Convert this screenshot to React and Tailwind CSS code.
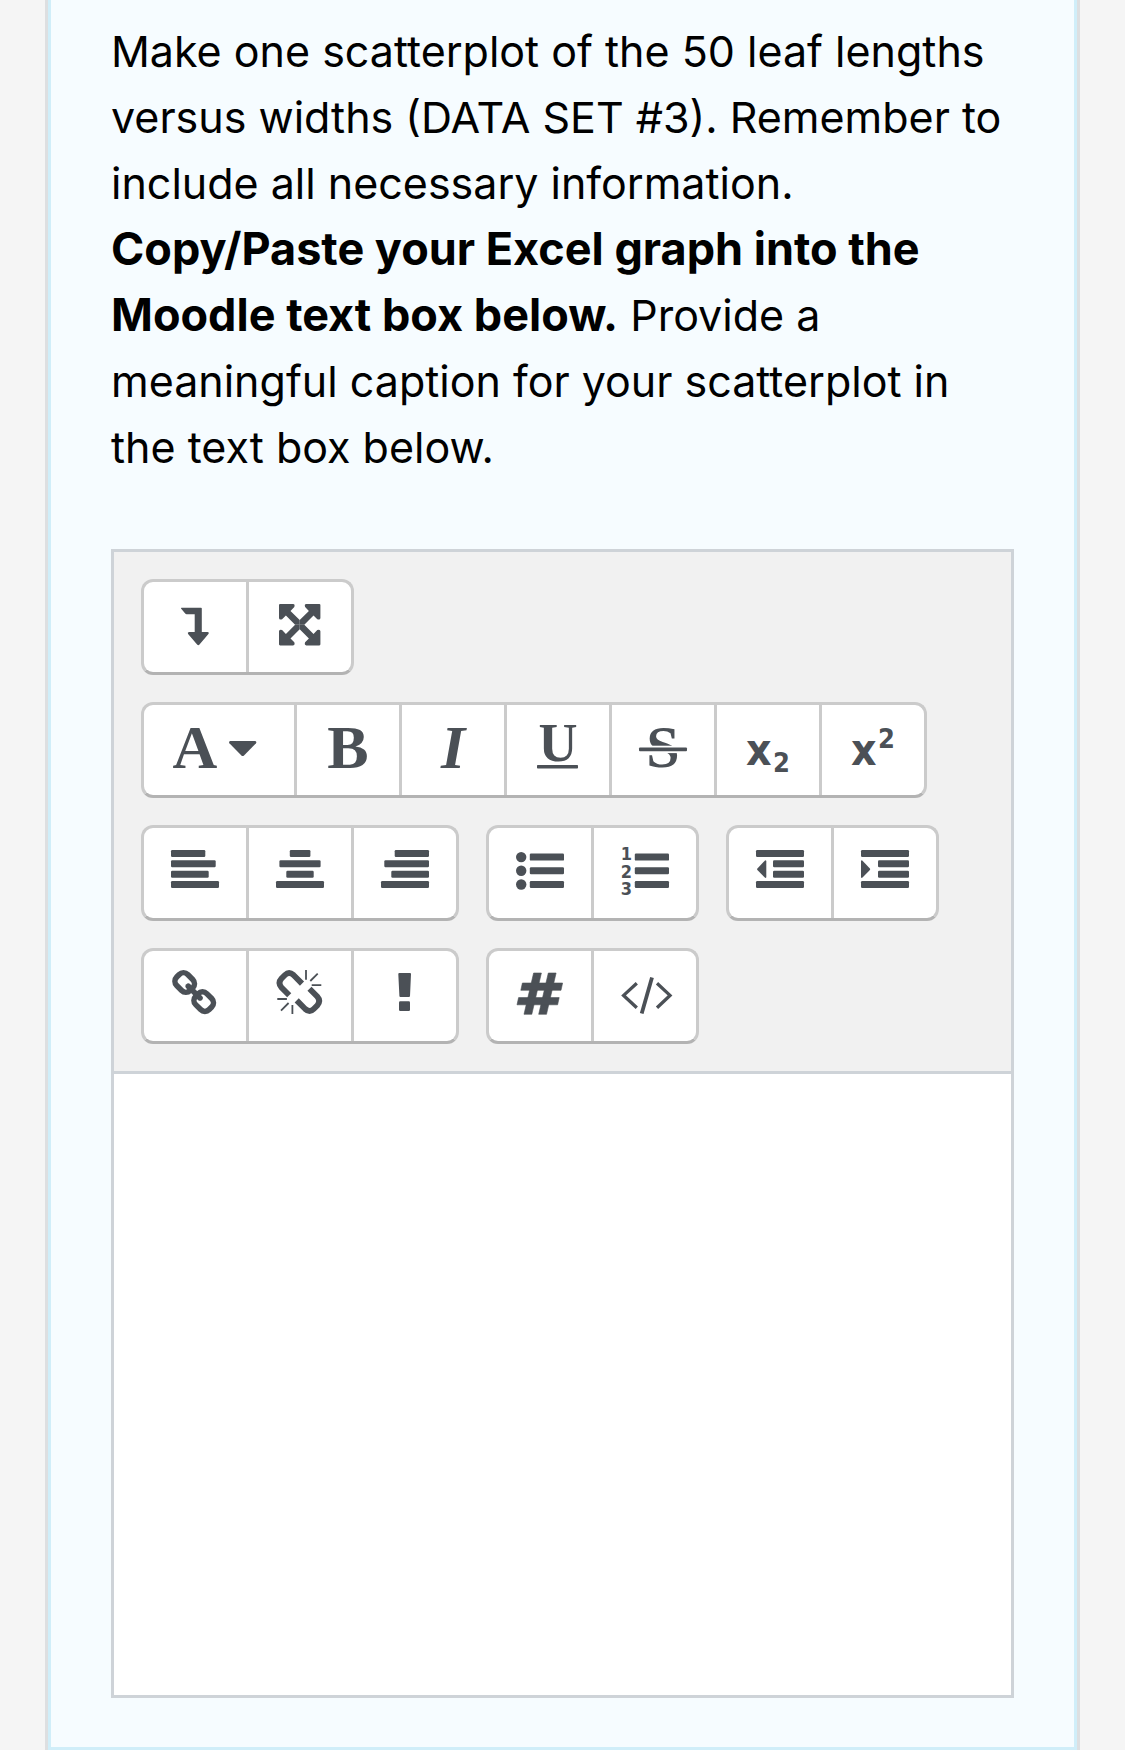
import { useState } from "react";

const serif = "font-['Liberation_Serif',serif]";
const sans = "font-['DejaVu_Sans_Condensed','DejaVu_Sans',sans-serif]";

function Icon({ children }) {
  return (
    <svg
      className="w-12 h-12 shrink-0 overflow-visible"
      viewBox="0 0 48 48"
      fill="currentColor"
      aria-hidden="true"
    >
      {children}
    </svg>
  );
}

// Horizontal bars given as [x, y, width]
function Bars({ rows }) {
  return rows.map(([x, y, w]) => (
    <rect key={y} x={x} y={y} width={w} height="7" rx="1.2" />
  ));
}

function ToggleIcon() {
  return (
    <Icon>
      <path d="M10.6 4.7H30Q30.8 4.7 30.8 5.5V29H36.5Q38.6 29.4 37.4 31L28.5 41.5Q27.3 42.8 26.1 41.5L17.1 31Q16 29.4 18 29H23.7V11.2H15.6Q14.8 11.2 14.2 10.5L10.2 5.7Q9.6 4.7 10.6 4.7Z" />
    </Icon>
  );
}

function FullscreenIcon() {
  const arm =
    "M0 0V-4.6L-9.2 -13.8L-5.4 -17.6Q-4.4 -20.6 -6.6 -20.7H-19.6Q-20.7 -20.7 -20.7 -19.6V-6.6Q-20.6 -4.4 -17.6 -5.4L-13.8 -9.2L-4.6 0Z";
  return (
    <Icon>
      <g transform="translate(23.7 21.7)">
        {[0, 90, 180, 270].map((deg) => (
          <path key={deg} d={arm} transform={`rotate(${deg})`} />
        ))}
      </g>
    </Icon>
  );
}

function LetterIcon({ children, className = "" }) {
  return (
    <Icon>
      <text
        x="24"
        y="42"
        textAnchor="middle"
        className={`${serif} text-[62px] font-bold ${className}`}
      >
        {children}
      </text>
    </Icon>
  );
}

function CaretIcon() {
  return (
    <Icon>
      <path d="M11.2 15H36.2Q38 15.6 37 17.2L25 29.4Q23.7 30.6 22.4 29.4L10.4 17.2Q9.4 15.6 11.2 15Z" />
    </Icon>
  );
}

function UnderlineIcon() {
  return (
    <Icon>
      <text
        x="24"
        y="35"
        textAnchor="middle"
        className={`${serif} text-[54px] font-bold`}
      >
        U
      </text>
      <rect x="3" y="39" width="41" height="3.6" rx="0.8" />
    </Icon>
  );
}

function StrikeIcon() {
  return (
    <Icon>
      <text
        x="24"
        y="41"
        textAnchor="middle"
        className={`${serif} text-[60px] font-bold`}
      >
        S
      </text>
      <rect x="0" y="19.7" width="48" height="7.4" fill="#fff" />
      <rect x="0" y="21.6" width="48" height="3.6" rx="1" />
    </Icon>
  );
}

function ScriptIcon({ baseline }) {
  return (
    <Icon>
      <text x="2" y="39" className={`${sans} text-[44px] font-bold`}>
        x
      </text>
      <text x="29" y={baseline} className={`${sans} text-[27px] font-bold`}>
        2
      </text>
    </Icon>
  );
}

function AlignLeftIcon() {
  return (
    <Icon>
      <Bars rows={[[0, 1, 34.3], [0, 11.3, 44.7], [0, 21.7, 37.7], [0, 32, 48]]} />
    </Icon>
  );
}

function AlignCenterIcon() {
  return (
    <Icon>
      <Bars rows={[[13.8, 1, 20.6], [3.4, 11.3, 41.2], [10.3, 21.7, 27.4], [0, 32, 48]]} />
    </Icon>
  );
}

function AlignRightIcon() {
  return (
    <Icon>
      <Bars rows={[[13.7, 1, 34.3], [3.3, 11.3, 44.7], [10.3, 21.7, 37.7], [0, 32, 48]]} />
    </Icon>
  );
}

const listRows = [[13.8, 4.6, 34.2], [13.8, 18.3, 34.2], [13.8, 32, 34.2]];

function BulletListIcon() {
  return (
    <Icon>
      {[8.1, 21.8, 35.5].map((y) => (
        <circle key={y} cx="5.2" cy={y} r="5.2" />
      ))}
      <Bars rows={listRows} />
    </Icon>
  );
}

function NumberListIcon() {
  return (
    <Icon>
      {[1, 2, 3].map((n) => (
        <text
          key={n}
          x="5.5"
          y={n * 17.2 - 5.9}
          textAnchor="middle"
          className={`${sans} text-[18px] font-bold`}
        >
          {n}
        </text>
      ))}
      <Bars rows={listRows} />
    </Icon>
  );
}

const indentRows = [[0, 1, 48], [17, 11.3, 31], [17, 21.7, 31], [0, 32, 48]];

function OutdentIcon() {
  return (
    <Icon>
      <Bars rows={indentRows} />
      <path d="M10.3 12V28.3Q9.8 29.4 8.8 28.6L1.4 20.9Q0.8 20.1 1.4 19.4L8.8 11.7Q9.8 10.9 10.3 12Z" />
    </Icon>
  );
}

function IndentIcon() {
  return (
    <Icon>
      <Bars rows={indentRows} />
      <path d="M0 12V28.3Q0.5 29.4 1.5 28.6L8.9 20.9Q9.5 20.1 8.9 19.4L1.5 11.7Q0.5 10.9 0 12Z" />
    </Icon>
  );
}

function LinkIcon() {
  return (
    <Icon>
      <g fill="none" stroke="currentColor" strokeWidth="5.6">
        <rect x="-9.5" y="-7.8" width="19" height="15.6" rx="6" transform="translate(13.7 10.5) rotate(45)" />
        <rect x="-9.5" y="-7.8" width="19" height="15.6" rx="6" transform="translate(32.7 29.6) rotate(45)" />
        <path d="M17.3 14.2L29 25.9" strokeLinecap="round" />
      </g>
    </Icon>
  );
}

function UnlinkIcon() {
  return (
    <Icon>
      <g fill="none" stroke="currentColor" strokeWidth="5.8">
        <path d="M26 11.6L17.5 3Q13 -1 9 3L5.5 6.5Q1.5 11 5.5 15.5L13.2 23.2" />
        <path d="M20.7 28.4L29.2 37Q33.7 41 37.7 37L41.2 33.5Q45.2 29 41.2 24.5L33.5 16.8" />
      </g>
      <path
        fill="none"
        stroke="currentColor"
        strokeWidth="1.8"
        d="M30 -2V7.7M41.7 1.7L34.3 9M35.7 13.1H45.3M1.3 27H10.9M12.6 31L5 38.6M16.4 33V42"
      />
    </Icon>
  );
}

function AccessibilityIcon() {
  return (
    <Icon>
      <path d="M18.3 1H29Q30 1 30 2L29 24Q28.9 25 28 25H19.4Q18.4 25 18.4 24L17.3 2Q17.3 1 18.3 1Z" />
      <rect x="18" y="29.3" width="11" height="9.7" rx="1.2" />
    </Icon>
  );
}

function HashIcon() {
  return (
    <Icon>
      <path d="M17.6 1H25.4L15.8 42.3H8ZM32.3 1H40.1L30.5 42.3H22.7Z" stroke="currentColor" strokeWidth="0.6" strokeLinejoin="round" />
      <path d="M6.4 11H46.6L45 18.3H4.8ZM2.6 25.6H43.2L41.6 32.8H1Z" stroke="currentColor" strokeWidth="0.6" strokeLinejoin="round" />
    </Icon>
  );
}

function CodeIcon() {
  return (
    <Icon>
      <g fill="none" stroke="currentColor" strokeWidth="3.3">
        <path d="M15.8 11.3L2.6 23.4L15.8 35.8M36 11.3L49 23.4L36 35.8" />
        <path d="M31 5.5L20.7 41.5" strokeWidth="3.8" />
      </g>
    </Icon>
  );
}

const toolbar = [
  [
    [
      { label: "Show more buttons", icon: <ToggleIcon /> },
      { label: "Toggle full screen", icon: <FullscreenIcon /> },
    ],
  ],
  [
    [
      {
        label: "Paragraph styles",
        icon: (
          <>
            <LetterIcon>A</LetterIcon>
            <CaretIcon />
          </>
        ),
      },
      { label: "Bold", icon: <LetterIcon>B</LetterIcon> },
      { label: "Italic", icon: <LetterIcon className="italic">I</LetterIcon> },
      { label: "Underline", icon: <UnderlineIcon /> },
      { label: "Strike through", icon: <StrikeIcon /> },
      { label: "Subscript", icon: <ScriptIcon baseline={45.7} /> },
      { label: "Superscript", icon: <ScriptIcon baseline={22} /> },
    ],
  ],
  [
    [
      { label: "Left align", icon: <AlignLeftIcon /> },
      { label: "Center", icon: <AlignCenterIcon /> },
      { label: "Right align", icon: <AlignRightIcon /> },
    ],
    [
      { label: "Unordered list", icon: <BulletListIcon /> },
      { label: "Ordered list", icon: <NumberListIcon /> },
    ],
    [
      { label: "Outdent", icon: <OutdentIcon /> },
      { label: "Indent", icon: <IndentIcon /> },
    ],
  ],
  [
    [
      { label: "Link", icon: <LinkIcon /> },
      { label: "Unlink", icon: <UnlinkIcon /> },
      { label: "Accessibility checker", icon: <AccessibilityIcon /> },
    ],
    [
      { label: "Word count", icon: <HashIcon /> },
      { label: "HTML", icon: <CodeIcon /> },
    ],
  ],
];

function ButtonGroup({ buttons }) {
  return (
    <div className="flex bg-white border-3 border-[#cbcbcb] border-b-[#b3b3b3] rounded-xl divide-x-3 divide-[#cbcbcb]">
      {buttons.map((b) => (
        <button
          key={b.label}
          type="button"
          aria-label={b.label}
          title={b.label}
          className="box-content flex items-center h-[90px] px-[27px]"
        >
          {b.icon}
        </button>
      ))}
    </div>
  );
}

function Editor() {
  const [answer, setAnswer] = useState("");

  return (
    <div className="border-3 border-[#ced3d8]">
      <div className="flex flex-col gap-[27px] p-[27px] bg-[#f1f1f1] border-b-3 border-[#ced3d8] text-[#4b5056]">
        {toolbar.map((row, i) => (
          <div key={i} className="flex flex-wrap gap-[27px]">
            {row.map((buttons, j) => (
              <ButtonGroup key={j} buttons={buttons} />
            ))}
          </div>
        ))}
      </div>
      <textarea
        aria-label="Answer text"
        value={answer}
        onChange={(e) => setAnswer(e.target.value)}
        className="block w-full h-[621px] p-6 bg-white text-[44px] resize-none outline-none"
      />
    </div>
  );
}

function App() {
  return (
    <div className="bg-[#f5f5f5] px-[45px] font-['Inter',sans-serif] text-black">
      <div className="border-x-3 border-[#dddfe1]">
        <main className="border-x-3 border-b-3 border-[#d0eef9] bg-[#f6fcff] px-[60px] pt-[18px] pb-[49px]">
          <p className="text-[43px] leading-[66px] mb-[69px]">
            Make one scatterplot of the 50 leaf lengths versus widths (DATA SET
            #3). Remember to include all necessary information.{" "}
            <strong className="text-[45px] font-bold">
              Copy/Paste your Excel graph into the Moodle text box below.
            </strong>{" "}
            Provide a meaningful caption for your scatterplot in the text box
            below.
          </p>
          <Editor />
        </main>
      </div>
    </div>
  );
}

export default App;
